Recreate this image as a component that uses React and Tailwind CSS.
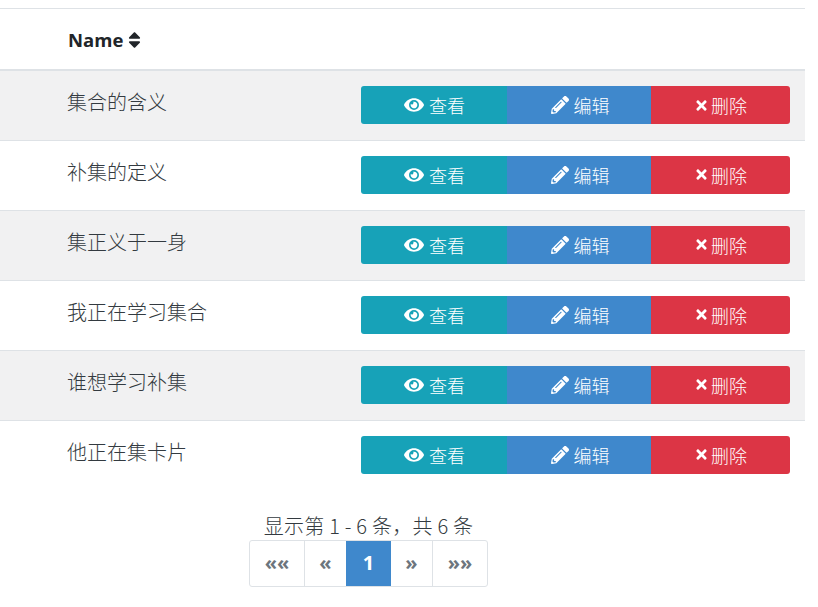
import React from "react";
import { FaEye, FaPencilAlt, FaTimes, FaSort } from "react-icons/fa";

const rows = ["集合的含义", "补集的定义", "集正义于一身", "我正在学习集合", "谁想学习补集", "他正在集卡片"];

function Btn({ cls, w, icon, label, gap }) {
  return (
    <button className={`flex h-[38px] items-center justify-center text-[18px] font-light text-white ${cls} ${w} ${gap}`}>
      {icon}
      <span className="leading-[38px]">{label}</span>
    </button>
  );
}

export default function App() {
  return (
    <div className="h-[607px] w-[818px] overflow-hidden bg-white pt-2 font-['Noto_Sans_CJK_SC',sans-serif] text-base text-[#333a40]">
      <table className="w-[805px] border-collapse">
        <thead>
          <tr className="h-[61px] border-t border-b-2 border-[#dee2e6]">
            <th className="pt-[2px] pl-[68px] text-left font-['Open_Sans','Noto_Sans_CJK_SC',sans-serif] text-[18.5px] font-bold text-[#212529]">
              <span className="inline-flex items-center gap-[5px]">
                Name <FaSort className="h-[20px] w-[13px]" />
              </span>
            </th>
            <th></th>
          </tr>
        </thead>
        <tbody>
          {rows.map((r, i) => (
            <tr key={r} className={`border-b border-[#dee2e6] last:border-b-0 ${i === 0 ? "h-[71px]" : "h-[70px]"} ${i % 2 === 0 ? "bg-[#f1f1f2]" : "bg-white"}`}>
              <td className={`pl-[67px] align-middle text-[20px] leading-6 font-light ${i === 0 ? "pb-[6px]" : "pb-[8px]"}`}>{r}</td>
              <td className={`pr-[15px] align-middle ${i === 0 ? "pb-0" : "pb-[2px]"}`}>
                <div className="flex justify-end overflow-hidden">
                  <Btn cls="rounded-l-[3px] bg-[#17a2b8] pl-[1px]" w="w-[146px]" gap="gap-[5px]" icon={<FaEye className="h-[20px] w-[20px]" />} label="查看" />
                  <Btn cls="bg-[#3f88cc] pl-[2px]" w="w-[144px]" gap="gap-[5px]" icon={<FaPencilAlt className="h-[18px] w-[18px]" />} label="编辑" />
                  <Btn cls="rounded-r-[3px] bg-[#dc3545]" w="w-[139px]" gap="gap-[2px]" icon={<FaTimes className="h-[15px] w-[15px]" />} label="删除" />
                </div>
              </td>
            </tr>
          ))}
        </tbody>
      </table>
      <div className="mt-[22px] flex w-[737px] flex-col items-center">
        <div className="h-[27px] text-[20px] leading-[26px] font-light tracking-[0.25px]">显示第 1 - 6 条，共 6 条</div>
        <div className="flex h-[47px] overflow-hidden rounded-[3px] border border-[#dee2e6] font-['Open_Sans',sans-serif] text-[20px] font-bold text-[#6c757d]">
          <span className="flex w-[55px] items-center justify-center border-r border-[#dee2e6]">««</span>
          <span className="flex w-[41px] items-center justify-center">«</span>
          <span className="flex w-[45px] items-center justify-center bg-[#3f88cc] text-white">1</span>
          <span className="flex w-[42px] items-center justify-center border-r border-[#dee2e6]">»</span>
          <span className="flex w-[54px] items-center justify-center">»»</span>
        </div>
      </div>
    </div>
  );
}
